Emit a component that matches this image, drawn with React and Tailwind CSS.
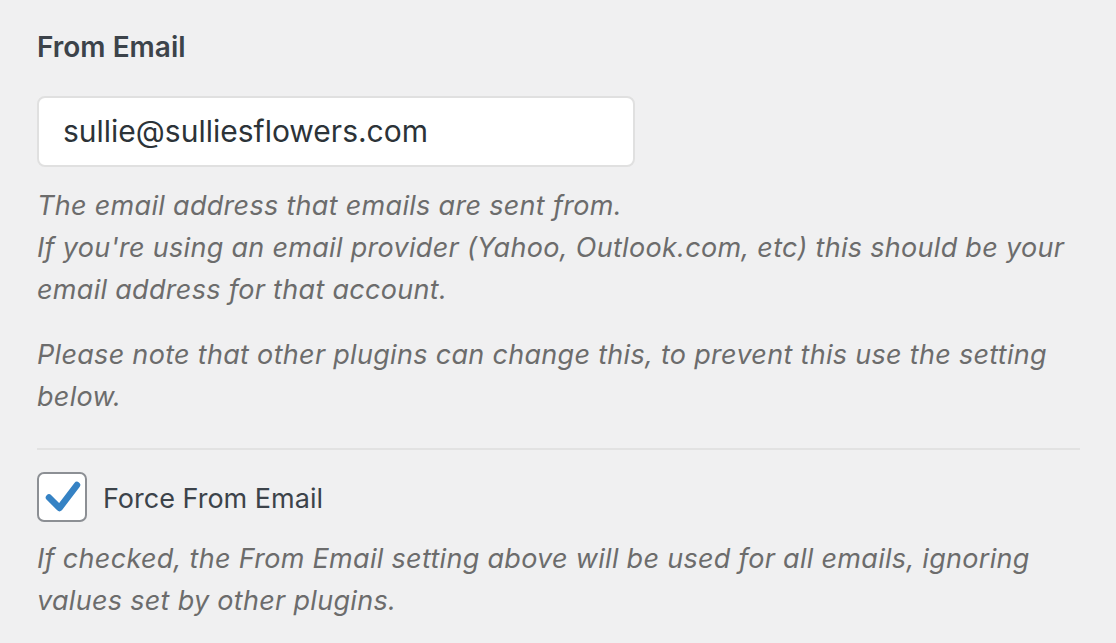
import React from "react";

const SettingsPanel = () => {
  return (
    <div className="min-h-[643px] bg-[#f0f0f1] pl-[37px] pr-[36px] pt-[27px] font-['Inter','Liberation_Sans',sans-serif]">
      <label className="block text-[28px] leading-[40px] font-semibold text-[#3c434a]">
        From Email
      </label>
      <div className="mt-[29px] flex h-[71px] w-[598px] items-center rounded-[8px] border-2 border-[#e0e0e0] bg-white px-[24px] text-[30px] text-[#2c3338]">
        sullie@sulliesflowers.com
      </div>
      <div className="mt-[18px] whitespace-nowrap text-[27px] leading-[42px] tracking-[0.3px] italic text-[#6c6c6c]">
        <p>
          The email address that emails are sent from.
          <br />
          If you're using an email provider (Yahoo, Outlook.com, etc) this
          should be your
          <br />
          email address for that account.
        </p>
        <p className="mt-[23px]">
          Please note that other plugins can change this, to prevent this use
          the setting
          <br />
          below.
        </p>
      </div>
      <div className="mt-[30px] border-t-2 border-[#e2e2e2]" />
      <div className="mt-[22px] flex items-center gap-[16px]">
        <span className="flex h-[50px] w-[50px] items-center justify-center rounded-[7px] border-2 border-[#8c8f94] bg-white">
          <svg width="40" height="40" viewBox="0 0 40 40" fill="none">
            <path
              d="M7 20.5 L17.5 31 L35 8"
              stroke="#3582c4"
              strokeWidth="6.5"
              strokeLinecap="round"
              strokeLinejoin="round"
            />
          </svg>
        </span>
        <span className="pt-[4px] text-[27px] text-[#3c434a]">Force From Email</span>
      </div>
      <p className="mt-[16px] whitespace-nowrap text-[27px] leading-[42px] tracking-[0.3px] italic text-[#6c6c6c]">
        If checked, the From Email setting above will be used for all emails,
        ignoring
        <br />
        values set by other plugins.
      </p>
    </div>
  );
};

export default function App() {
  return <SettingsPanel />;
}
